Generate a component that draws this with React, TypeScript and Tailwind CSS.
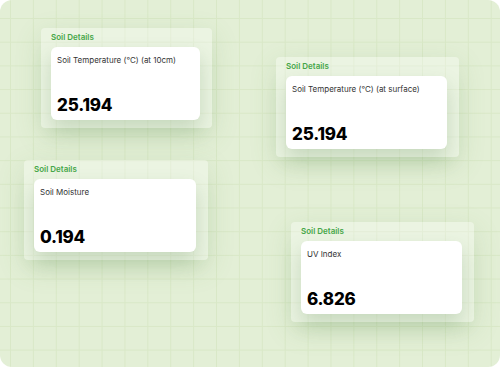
import React from 'react';

interface SoilCardProps {
  title: string;
  value: string;
  left: number;
  top: number;
  width: number;
}

const cards: SoilCardProps[] = [
  { title: 'Soil Temperature (°C) (at 10cm)', value: '25.194', left: 41, top: 28, width: 149 },
  { title: 'Soil Temperature (°C) (at surface)', value: '25.194', left: 276, top: 57, width: 161 },
  { title: 'Soil Moisture', value: '0.194', left: 24, top: 160, width: 162 },
  { title: 'UV Index', value: '6.826', left: 291, top: 222, width: 161 },
];

function SoilCard({ title, value, left, top, width }: SoilCardProps) {
  return (
    <div
      className="absolute rounded-[4px] bg-white/30 pt-[4px] pl-[10px] pr-[12px] pb-[8px] shadow-[0_8px_28px_rgba(90,140,70,0.16)]"
      style={{ left, top }}
    >
      <div className="h-[11px] text-[8px] leading-[11px] font-semibold text-[#45a648]">Soil Details</div>
      <div
        className="mt-[4px] flex h-[73px] flex-col justify-between rounded-[6px] bg-white px-[6px] pt-[8px] pb-[6px] shadow-[0_10px_20px_rgba(70,120,60,0.22)]"
        style={{ width }}
      >
        <div className="text-[8px] leading-[10px] text-[#333]">{title}</div>
        <div className="text-[17px] leading-[18px] font-extrabold text-black tracking-[-0.2px]">{value}</div>
      </div>
    </div>
  );
}

export default function App() {
  return (
    <div className="h-[367px] w-[500px] bg-white font-['Inter','Noto_Sans',sans-serif]">
      <div className="relative h-full w-full overflow-hidden rounded-[12px] bg-[#e3efd6] bg-[linear-gradient(to_right,#d9e8c7_1px,transparent_1px),linear-gradient(to_bottom,#d9e8c7_1px,transparent_1px)] bg-[length:22.9px_23.7px] bg-[position:10px_18px]">
        {cards.map((c) => (
          <SoilCard key={c.title} {...c} />
        ))}
      </div>
    </div>
  );
}
